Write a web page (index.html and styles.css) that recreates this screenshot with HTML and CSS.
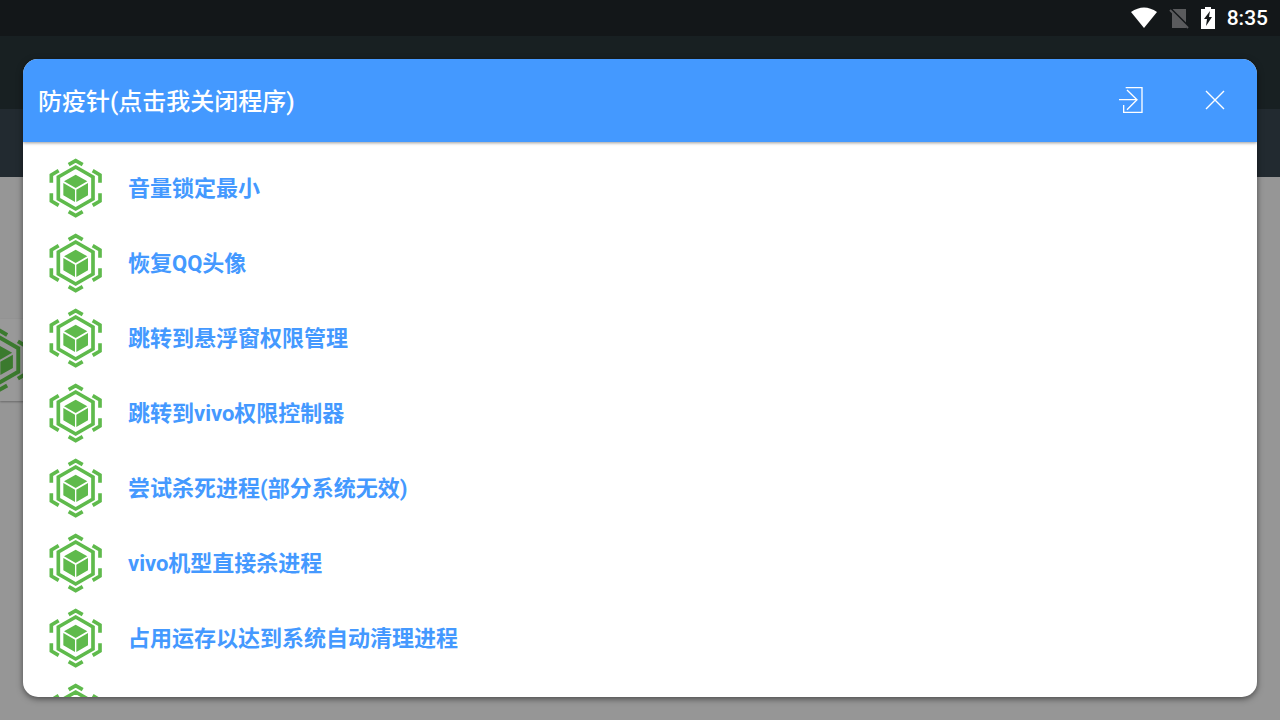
FILE: index.html
```html
<!DOCTYPE html>
<html lang="zh-CN">
<head>
    <meta charset="UTF-8">
    <meta name="viewport" content="width=device-width, initial-scale=1.0">
    <title>防疫针</title>
    <link rel="stylesheet" href="styles.css">
</head>
<body>
    <!-- 图标 -->
    <svg class="symbols" aria-hidden="true">
        <symbol id="cube" viewBox="27 22 162 180">
            <g fill="none" stroke="currentColor" stroke-width="11">
                <path d="M107 49L159 79V145L107 175L55 145V79Z"/>
                <path d="M86 42L107 30L128 42M86 183L107 195L128 183"/>
                <path d="M56 60L34 73V96M158 60L180 73V96M34 128V151L56 164M180 128V151L158 164"/>
            </g>
            <path fill="currentColor" d="M107 72L142 92L107 112L72 92ZM70 97L105 117V154L70 134ZM144 97L109 117V154L144 134Z"/>
        </symbol>
    </svg>

    <!-- 状态栏 -->
    <div class="status-bar">
        <svg width="26" height="22" viewBox="0 0 26 22"><path fill="#fff" d="M0 5Q13 -4 26 5L13 21Z"/></svg>
        <svg width="20" height="22" viewBox="0 0 20 22">
            <path fill="#5a5b5d" d="M4 2H17V21H3V3Z"/>
            <path stroke="#131719" stroke-width="2" d="M2 2L20 20"/>
            <path stroke="#5a5b5d" stroke-width="2" d="M1 3L19 21"/>
        </svg>
        <svg width="14" height="22" viewBox="0 0 14 22">
            <path fill="#fff" d="M4 0H10V2H14V22H0V2H4Z"/>
            <path fill="#131719" d="M9 4L3 12H6L5 19L11 10H8Z"/>
        </svg>
        <span>8:35</span>
    </div>

    <!-- 被遮住的主界面 -->
    <div class="toolbar"></div>
    <div class="tabs"></div>
    <div class="page">
        <div class="page-card">
            <svg class="page-icon"><use href="#cube"/></svg>
        </div>
    </div>

    <!-- 弹窗 -->
    <div class="dialog" role="dialog" aria-labelledby="dialog-title">
        <header class="dialog-header">
            <h1 id="dialog-title"><button class="title-button">防疫针(点击我关闭程序)</button></h1>
            <button class="header-button" aria-label="退出">
                <svg width="24" height="26" viewBox="0 0 72 78" fill="none" stroke="#fff" stroke-width="4">
                    <path d="M20 2H69V76H14V54"/>
                    <path d="M0 38H54"/>
                    <path d="M24 9L54 38L24 68"/>
                </svg>
            </button>
            <button class="header-button" aria-label="关闭">
                <svg width="20" height="20" viewBox="0 0 20 20" stroke="#fff" stroke-width="1.4">
                    <path d="M1 1L19 19M19 1L1 19"/>
                </svg>
            </button>
        </header>
        <ul class="menu">
            <li><button class="menu-item"><svg class="menu-icon"><use href="#cube"/></svg><span>音量锁定最小</span></button></li>
            <li><button class="menu-item"><svg class="menu-icon"><use href="#cube"/></svg><span>恢复QQ头像</span></button></li>
            <li><button class="menu-item"><svg class="menu-icon"><use href="#cube"/></svg><span>跳转到悬浮窗权限管理</span></button></li>
            <li><button class="menu-item"><svg class="menu-icon"><use href="#cube"/></svg><span>跳转到vivo权限控制器</span></button></li>
            <li><button class="menu-item"><svg class="menu-icon"><use href="#cube"/></svg><span>尝试杀死进程(部分系统无效)</span></button></li>
            <li><button class="menu-item"><svg class="menu-icon"><use href="#cube"/></svg><span>vivo机型直接杀进程</span></button></li>
            <li><button class="menu-item"><svg class="menu-icon"><use href="#cube"/></svg><span>占用运存以达到系统自动清理进程</span></button></li>
            <li><button class="menu-item"><svg class="menu-icon"><use href="#cube"/></svg></button></li>
        </ul>
    </div>
</body>
</html>
```
FILE: styles.css
```css
* {
    box-sizing: border-box;
}

body {
    margin: 0;
    height: 100vh;
    display: flex;
    flex-direction: column;
    overflow: hidden;
    background-color: #969696;
    font-family: Roboto, "Noto Sans CJK SC", sans-serif;
}

button {
    padding: 0;
    border: none;
    background: none;
    color: inherit;
    font: inherit;
    cursor: pointer;
}

.symbols {
    position: absolute;
    width: 0;
    height: 0;
}

.status-bar {
    height: 36px;
    padding: 0 12px;
    display: flex;
    align-items: center;
    justify-content: flex-end;
    gap: 12px;
    background-color: #131719;
    color: #fff;
    font-size: 21px;
    font-weight: 500;
}

.toolbar {
    height: 73px;
    background-color: #182022;
}

.tabs {
    height: 68px;
    background-color: #222a30;
}

.page {
    flex: 1;
    padding-top: 142px;
}

.page-card {
    height: 82px;
    margin-right: 24px;
    display: flex;
    align-items: center;
    background-color: #999;
    box-shadow: 0 1px 2px rgba(0, 0, 0, 0.3);
}

.page-icon {
    width: 58px;
    height: 66px;
    margin-left: -29px;
    color: #3b7a2e;
}

.dialog {
    position: absolute;
    top: 59px;
    right: 23px;
    bottom: 23px;
    left: 23px;
    display: flex;
    flex-direction: column;
    overflow: hidden;
    border-radius: 15px;
    background-color: #fff;
    box-shadow: 0 2px 6px rgba(0, 0, 0, 0.5);
}

.dialog-header {
    height: 83px;
    padding-bottom: 2px;
    flex-shrink: 0;
    display: flex;
    z-index: 1;
    background-color: #4499ff;
    color: #fff;
    box-shadow: 0 1px 3px rgba(0, 0, 0, 0.4);
}

.dialog-header h1 {
    flex: 1;
    display: flex;
    margin: 0;
    padding-left: 15px;
    font-size: 24px;
    font-weight: 500;
}

.header-button {
    width: 84px;
    display: flex;
    align-items: center;
    justify-content: center;
}

.menu {
    flex: 1;
    min-height: 0;
    margin: 0;
    padding: 8px 0;
    overflow: hidden;
    list-style: none;
}

.menu-item {
    width: 100%;
    height: 75px;
    padding: 0 26px;
    display: flex;
    align-items: center;
    gap: 25px;
    color: #4499ff;
    font-size: 22px;
    font-weight: 700;
    text-align: left;
}

.menu-item span {
    padding-bottom: 4px;
}

.menu-icon {
    width: 54px;
    height: 60px;
    color: #5fba4c;
}
```
